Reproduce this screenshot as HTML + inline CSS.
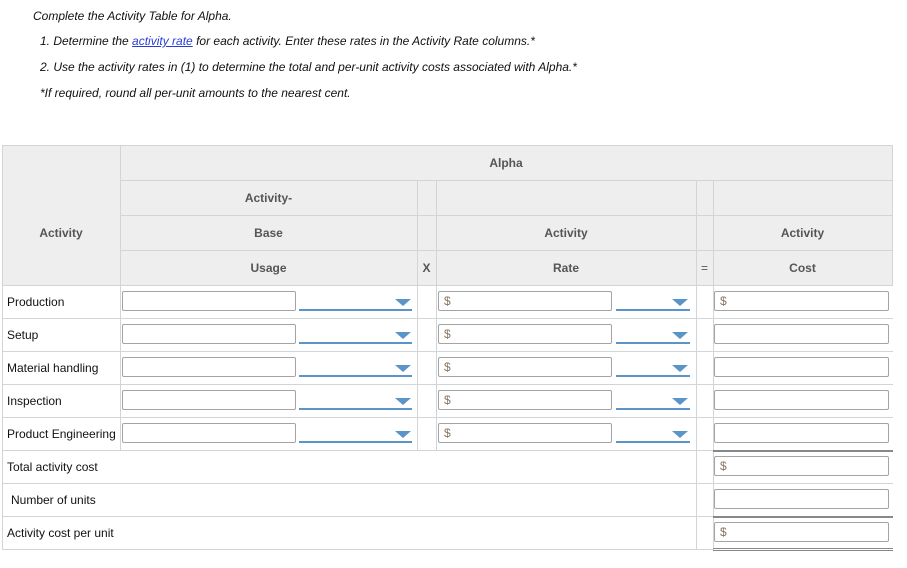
<!DOCTYPE html>
<html><head><meta charset="utf-8"><style>
body{margin:0;width:907px;height:568px;background:#fff;font-family:"Liberation Sans",Arial,sans-serif;position:relative;overflow:hidden}
.a{position:absolute}
.t{font-size:12px;color:#111;font-style:italic}
.bg{background:#eeeeee}
.h{background:#d0d5d8}
.hd{font-size:12px;font-weight:bold;color:#555;text-align:center}
.in{position:absolute;height:18px;border:1px solid #a4a4a4;border-radius:2px;background:#fff}
.d{position:absolute;font-size:12px;color:#8a7460;left:5px;top:2px}
.ul{position:absolute;height:2px;background:#5b94c8}
.tri{position:absolute;width:0;height:0;border-left:8px solid transparent;border-right:8px solid transparent;border-top:7px solid #5b94c8}
.lb{position:absolute;font-size:12px;color:#111}
</style></head><body>
<div class="a t" style="left:33px;top:9px">Complete the Activity Table for Alpha.</div>
<div class="a t" style="left:40px;top:34px">1. Determine the <span style="color:#2a3cd8;text-decoration:underline">activity rate</span> for each activity. Enter these rates in the Activity Rate columns.*</div>
<div class="a t" style="left:40px;top:60px">2. Use the activity rates in (1) to determine the total and per-unit activity costs associated with Alpha.*</div>
<div class="a t" style="left:40px;top:86px">*If required, round all per-unit amounts to the nearest cent.</div>

<!-- header bg -->
<div class="a bg" style="left:2px;top:145px;width:890px;height:140px"></div>
<!-- outer borders -->
<div class="a h" style="left:2px;top:145px;width:891px;height:1px"></div>
<div class="a h" style="left:2px;top:145px;width:1px;height:405px"></div>
<div class="a h" style="left:892px;top:145px;width:1px;height:140px"></div>
<!-- header horizontals -->
<div class="a h" style="left:120px;top:180px;width:772px;height:1px"></div>
<div class="a h" style="left:120px;top:215px;width:772px;height:1px"></div>
<div class="a h" style="left:120px;top:250px;width:772px;height:1px"></div>
<!-- header verticals -->
<div class="a h" style="left:120px;top:145px;width:1px;height:305px"></div>
<div class="a h" style="left:417px;top:180px;width:1px;height:270px"></div>
<div class="a h" style="left:436px;top:180px;width:1px;height:270px"></div>
<div class="a h" style="left:696px;top:180px;width:1px;height:370px"></div>
<div class="a h" style="left:713px;top:180px;width:1px;height:370px"></div>
<!-- row lines -->
<div class="a h" style="left:2px;top:285px;width:891px;height:1px"></div>
<div class="a h" style="left:2px;top:318px;width:711px;height:1px"></div>
<div class="a h" style="left:2px;top:351px;width:711px;height:1px"></div>
<div class="a h" style="left:2px;top:384px;width:711px;height:1px"></div>
<div class="a h" style="left:2px;top:417px;width:711px;height:1px"></div>
<div class="a h" style="left:2px;top:450px;width:711px;height:1px"></div>
<div class="a h" style="left:2px;top:483px;width:891px;height:1px"></div>
<div class="a h" style="left:2px;top:516px;width:711px;height:1px"></div>
<div class="a h" style="left:2px;top:549px;width:711px;height:1px"></div>
<div class="a h" style="left:713px;top:318px;width:180px;height:1px"></div>
<div class="a h" style="left:713px;top:351px;width:180px;height:1px"></div>
<div class="a h" style="left:713px;top:384px;width:180px;height:1px"></div>
<div class="a h" style="left:713px;top:417px;width:180px;height:1px"></div>
<!-- thick lines -->
<div class="a" style="left:713px;top:450px;width:180px;height:2px;background:#888"></div>
<div class="a" style="left:713px;top:516px;width:180px;height:2px;background:#888"></div>
<div class="a" style="left:713px;top:548px;width:180px;height:1px;background:#888"></div>
<div class="a" style="left:713px;top:550px;width:180px;height:1px;background:#888"></div>

<!-- header text -->
<div class="a hd" style="left:120px;width:772px;top:156px">Alpha</div>
<div class="a hd" style="left:2px;width:118px;top:226px">Activity</div>
<div class="a hd" style="left:120px;width:297px;top:191px">Activity-</div>
<div class="a hd" style="left:120px;width:297px;top:226px">Base</div>
<div class="a hd" style="left:120px;width:297px;top:261px">Usage</div>
<div class="a hd" style="left:417px;width:19px;top:261px">X</div>
<div class="a hd" style="left:436px;width:260px;top:226px">Activity</div>
<div class="a hd" style="left:436px;width:260px;top:261px">Rate</div>
<div class="a hd" style="left:696px;width:17px;top:261px;font-weight:normal">=</div>
<div class="a hd" style="left:713px;width:179px;top:226px">Activity</div>
<div class="a hd" style="left:713px;width:179px;top:261px">Cost</div>

<!-- labels -->
<div class="lb" style="left:7px;top:295px">Production</div>
<div class="lb" style="left:7px;top:328px">Setup</div>
<div class="lb" style="left:7px;top:361px">Material handling</div>
<div class="lb" style="left:7px;top:394px">Inspection</div>
<div class="lb" style="left:7px;top:427px">Product Engineering</div>
<div class="lb" style="left:7px;top:460px">Total activity cost</div>
<div class="lb" style="left:11px;top:493px">Number of units</div>
<div class="lb" style="left:7px;top:526px">Activity cost per unit</div>

<!-- row inputs -->
<div class="in" style="left:122px;top:291px;width:172px"></div>
<div class="ul" style="left:299px;top:309px;width:113px"></div><div class="tri" style="left:395px;top:299px"></div>
<div class="in" style="left:438px;top:291px;width:172px"><span class="d">$</span></div>
<div class="ul" style="left:616px;top:309px;width:74px"></div><div class="tri" style="left:672px;top:299px"></div>
<div class="in" style="left:714px;top:291px;width:173px"><span class="d">$</span></div>

<div class="in" style="left:122px;top:324px;width:172px"></div>
<div class="ul" style="left:299px;top:342px;width:113px"></div><div class="tri" style="left:395px;top:332px"></div>
<div class="in" style="left:438px;top:324px;width:172px"><span class="d">$</span></div>
<div class="ul" style="left:616px;top:342px;width:74px"></div><div class="tri" style="left:672px;top:332px"></div>
<div class="in" style="left:714px;top:324px;width:173px"></div>

<div class="in" style="left:122px;top:357px;width:172px"></div>
<div class="ul" style="left:299px;top:375px;width:113px"></div><div class="tri" style="left:395px;top:365px"></div>
<div class="in" style="left:438px;top:357px;width:172px"><span class="d">$</span></div>
<div class="ul" style="left:616px;top:375px;width:74px"></div><div class="tri" style="left:672px;top:365px"></div>
<div class="in" style="left:714px;top:357px;width:173px"></div>

<div class="in" style="left:122px;top:390px;width:172px"></div>
<div class="ul" style="left:299px;top:408px;width:113px"></div><div class="tri" style="left:395px;top:398px"></div>
<div class="in" style="left:438px;top:390px;width:172px"><span class="d">$</span></div>
<div class="ul" style="left:616px;top:408px;width:74px"></div><div class="tri" style="left:672px;top:398px"></div>
<div class="in" style="left:714px;top:390px;width:173px"></div>

<div class="in" style="left:122px;top:423px;width:172px"></div>
<div class="ul" style="left:299px;top:441px;width:113px"></div><div class="tri" style="left:395px;top:431px"></div>
<div class="in" style="left:438px;top:423px;width:172px"><span class="d">$</span></div>
<div class="ul" style="left:616px;top:441px;width:74px"></div><div class="tri" style="left:672px;top:431px"></div>
<div class="in" style="left:714px;top:423px;width:173px"></div>

<div class="in" style="left:714px;top:456px;width:173px"><span class="d">$</span></div>
<div class="in" style="left:714px;top:489px;width:173px"></div>
<div class="in" style="left:714px;top:522px;width:173px"><span class="d">$</span></div>
</body></html>
